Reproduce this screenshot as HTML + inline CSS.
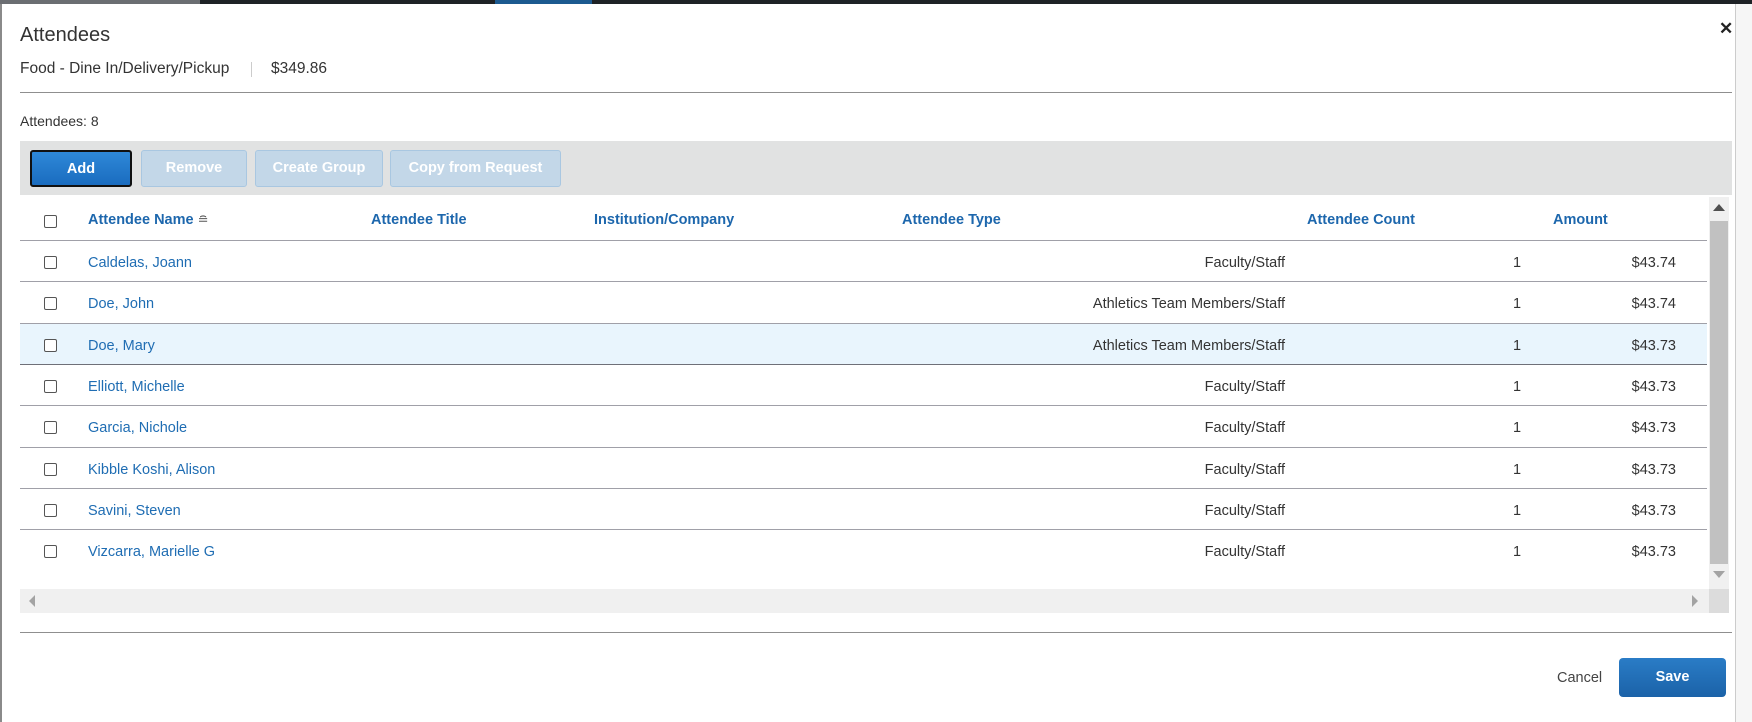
<!DOCTYPE html>
<html><head><meta charset="utf-8"><style>
*{margin:0;padding:0;box-sizing:border-box}
body{width:1752px;height:722px;overflow:hidden;background:#fff;font-family:"Liberation Sans",Arial,sans-serif;position:relative;color:#333}
.a{position:absolute;white-space:nowrap}
.top{left:0;top:0;width:1752px;height:4px;background:#1e2226}
.modal{left:0;top:4px;width:1736px;height:718px;background:#fff;border-left:2px solid #8a8a8a;border-right:1px solid #ccc}
.hl{height:1px;background:#8f8f8f}
.btn{top:150px;height:37px;border-radius:3px;font-size:14.5px;font-weight:bold;color:#fff;text-align:center;line-height:35px}
.dis{background:#c3d7e8;border:1px solid #a9c7e1}
.hd{top:212px;font-size:14.5px;font-weight:bold;color:#1d67ad}
.cb{width:13px;height:13px;border:1px solid #555;border-radius:2px;background:#fff}
.nm{font-size:14.5px;color:#1f6db3}
.tx{font-size:14.5px;color:#333}
.rl{left:20px;width:1687px;height:1px;background:#a0a0a8}
</style></head><body>
<div class="a top"></div>
<div class="a" style="left:0;top:0;width:200px;height:4px;background:#6b6e72"></div>
<div class="a" style="left:495px;top:0;width:97px;height:4px;background:#1c5a90"></div>
<div class="a modal"></div>
<div class="a" style="left:1736px;top:4px;width:16px;height:718px;background:#f6f6f6"></div>

<div class="a" style="left:20px;top:24px;font-size:20px;color:#333">Attendees</div>
<div class="a" style="left:1719px;top:19px;font-size:17px;font-weight:bold;color:#222">✕</div>
<div class="a" style="left:20px;top:60px;font-size:15.5px;color:#333">Food - Dine In/Delivery/Pickup</div>
<div class="a" style="left:251px;top:62px;width:1px;height:15px;background:#ccc"></div>
<div class="a" style="left:271px;top:60px;font-size:15.5px;color:#333">$349.86</div>
<div class="a hl" style="left:20px;top:92px;width:1712px"></div>
<div class="a" style="left:20px;top:113px;font-size:14px;color:#333">Attendees: 8</div>

<div class="a" style="left:20px;top:141px;width:1712px;height:54px;background:#e1e2e2"></div>
<div class="a btn" style="left:30px;width:102px;background:linear-gradient(#2e88d8,#1a6cbf);border:2px solid #111">Add</div>
<div class="a btn dis" style="left:141px;width:106px">Remove</div>
<div class="a btn dis" style="left:255px;width:128px">Create Group</div>
<div class="a btn dis" style="left:390px;width:171px">Copy from Request</div>

<div class="a cb" style="left:44px;top:215px"></div>
<div class="a hd" style="left:88px">Attendee Name <span style="font-weight:normal;color:#555;font-size:13px">≘</span></div>
<div class="a hd" style="left:371px">Attendee Title</div>
<div class="a hd" style="left:594px">Institution/Company</div>
<div class="a hd" style="left:902px">Attendee Type</div>
<div class="a hd" style="left:1307px">Attendee Count</div>
<div class="a hd" style="left:1553px">Amount</div>
<div class="a rl" style="top:240px"></div>

<div class="a" style="left:20px;top:324px;width:1687px;height:40px;background:#e9f5fd"></div>

<div class="a cb" style="left:44px;top:256px"></div><div class="a nm" style="left:88px;top:255px">Caldelas, Joann</div><div class="a tx" style="right:467px;top:255px">Faculty/Staff</div><div class="a tx" style="left:1513px;top:255px">1</div><div class="a tx" style="right:76px;top:255px">$43.74</div><div class="a rl" style="top:281px"></div>
<div class="a cb" style="left:44px;top:297px"></div><div class="a nm" style="left:88px;top:296px">Doe, John</div><div class="a tx" style="right:467px;top:296px">Athletics Team Members/Staff</div><div class="a tx" style="left:1513px;top:296px">1</div><div class="a tx" style="right:76px;top:296px">$43.74</div><div class="a rl" style="top:323px"></div>
<div class="a cb" style="left:44px;top:339px"></div><div class="a nm" style="left:88px;top:338px">Doe, Mary</div><div class="a tx" style="right:467px;top:338px">Athletics Team Members/Staff</div><div class="a tx" style="left:1513px;top:338px">1</div><div class="a tx" style="right:76px;top:338px">$43.73</div><div class="a rl" style="top:364px;background:#6f7078"></div>
<div class="a cb" style="left:44px;top:380px"></div><div class="a nm" style="left:88px;top:379px">Elliott, Michelle</div><div class="a tx" style="right:467px;top:379px">Faculty/Staff</div><div class="a tx" style="left:1513px;top:379px">1</div><div class="a tx" style="right:76px;top:379px">$43.73</div><div class="a rl" style="top:405px"></div>
<div class="a cb" style="left:44px;top:421px"></div><div class="a nm" style="left:88px;top:420px">Garcia, Nichole</div><div class="a tx" style="right:467px;top:420px">Faculty/Staff</div><div class="a tx" style="left:1513px;top:420px">1</div><div class="a tx" style="right:76px;top:420px">$43.73</div><div class="a rl" style="top:447px"></div>
<div class="a cb" style="left:44px;top:463px"></div><div class="a nm" style="left:88px;top:462px">Kibble Koshi, Alison</div><div class="a tx" style="right:467px;top:462px">Faculty/Staff</div><div class="a tx" style="left:1513px;top:462px">1</div><div class="a tx" style="right:76px;top:462px">$43.73</div><div class="a rl" style="top:488px"></div>
<div class="a cb" style="left:44px;top:504px"></div><div class="a nm" style="left:88px;top:503px">Savini, Steven</div><div class="a tx" style="right:467px;top:503px">Faculty/Staff</div><div class="a tx" style="left:1513px;top:503px">1</div><div class="a tx" style="right:76px;top:503px">$43.73</div><div class="a rl" style="top:529px"></div>
<div class="a cb" style="left:44px;top:545px"></div><div class="a nm" style="left:88px;top:544px">Vizcarra, Marielle G</div><div class="a tx" style="right:467px;top:544px">Faculty/Staff</div><div class="a tx" style="left:1513px;top:544px">1</div><div class="a tx" style="right:76px;top:544px">$43.73</div>

<div class="a" style="left:1709px;top:197px;width:20px;height:392px;background:#f0f0f0"></div>
<div class="a" style="left:1710px;top:221px;width:18px;height:343px;background:#c1c1c1"></div>
<div class="a" style="left:1713px;top:204px;width:0;height:0;border-left:6px solid transparent;border-right:6px solid transparent;border-bottom:7px solid #505050"></div>
<div class="a" style="left:1713px;top:571px;width:0;height:0;border-left:6px solid transparent;border-right:6px solid transparent;border-top:7px solid #a3a3a3"></div>
<div class="a" style="left:20px;top:589px;width:1689px;height:24px;background:#f0f0f0"></div>
<div class="a" style="left:1709px;top:589px;width:20px;height:24px;background:#dcdcdc"></div>
<div class="a" style="left:29px;top:595px;width:0;height:0;border-top:6px solid transparent;border-bottom:6px solid transparent;border-right:6px solid #a3a3a3"></div>
<div class="a" style="left:1692px;top:595px;width:0;height:0;border-top:6px solid transparent;border-bottom:6px solid transparent;border-left:6px solid #a3a3a3"></div>

<div class="a hl" style="left:20px;top:632px;width:1712px"></div>
<div class="a" style="left:1557px;top:670px;font-size:14.5px;color:#444">Cancel</div>
<div class="a" style="left:1619px;top:658px;width:107px;height:39px;border-radius:4px;background:linear-gradient(#2a7cc6,#1b62a8);color:#fff;font-weight:bold;font-size:14.5px;text-align:center;line-height:39px">Save</div>
</body></html>
